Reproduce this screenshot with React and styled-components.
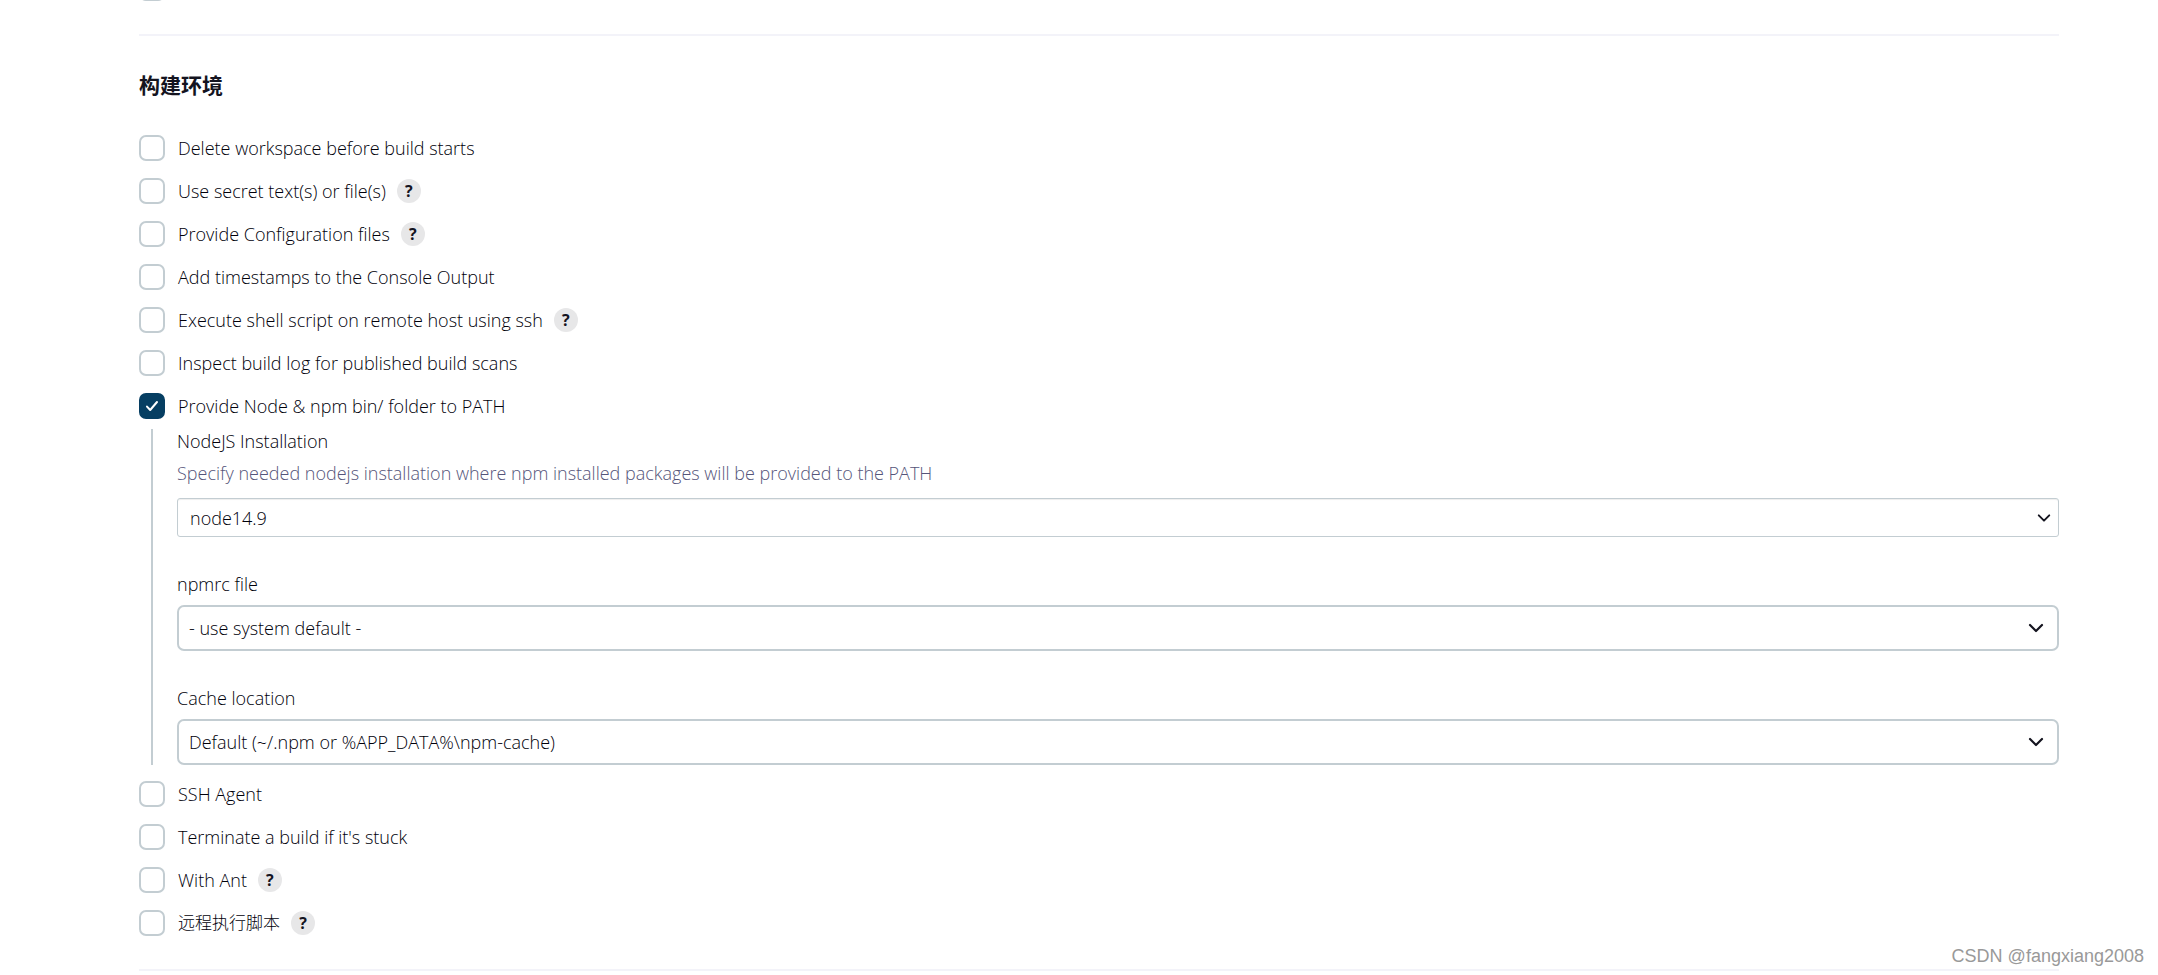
import React, { useState } from "react";
import styled, { createGlobalStyle } from "styled-components";

const BEFORE = [
  { id: "delete-workspace", label: "Delete workspace before build starts" },
  { id: "secrets", label: "Use secret text(s) or file(s)", help: true },
  { id: "config-files", label: "Provide Configuration files", help: true },
  { id: "timestamps", label: "Add timestamps to the Console Output" },
  { id: "remote-ssh", label: "Execute shell script on remote host using ssh", help: true },
  { id: "build-scans", label: "Inspect build log for published build scans" },
  { id: "nodejs", label: "Provide Node & npm bin/ folder to PATH" },
];

const AFTER = [
  { id: "ssh-agent", label: "SSH Agent" },
  { id: "timeout", label: "Terminate a build if it's stuck" },
  { id: "ant", label: "With Ant", help: true },
  { id: "remote-script", label: "远程执行脚本", help: true, cjk: true },
];

const GlobalStyle = createGlobalStyle`
  * { box-sizing: border-box; }
  body {
    margin: 0;
    background: #fff;
    color: #00000a;
    font-family: "Open Sans", "Noto Sans CJK SC", sans-serif;
    font-size: 18px;
    font-weight: 300;
    line-height: 24px;
  }
`;

const Page = styled.div`
  position: relative;
  padding: 0 99px 4px 139px;
  overflow: hidden;
`;

const Previous = styled.div`
  height: 34px;
  display: flex;
  align-items: flex-start;
  & > span { margin-top: -25px; }
`;

const Divider = styled.hr`
  height: 2px;
  margin: 0;
  border: 0;
  background: #f3f3f9;
`;

const Heading = styled.h2`
  margin: 35px 0 28px;
  color: #14141f;
  font-size: 21px;
  font-weight: 700;
  line-height: 28px;
`;

const Options = styled.div`
  padding-bottom: 24px;
`;

const Row = styled.div`
  display: flex;
  align-items: center;
  height: 43px;
  padding: 8px 0 9px;
`;

const RowLabel = styled.label`
  display: flex;
  align-items: center;
  gap: 13px;
  font-size: ${p => p.$cjk ? "17px" : "18px"};
  cursor: pointer;
`;

const BoxWrap = styled.span`
  position: relative;
  display: block;
  flex-shrink: 0;
  width: 26px;
  height: 26px;
`;

const Box = styled.input`
  appearance: none;
  display: block;
  width: 26px;
  height: 26px;
  margin: 0;
  border: 2px solid #c3cdd2;
  border-radius: 7px;
  background: #fff;
  cursor: pointer;
  &:checked {
    border-color: #063e62;
    background: #063e62;
  }
`;

const Tick = styled.svg`
  position: absolute;
  inset: 0;
  pointer-events: none;
`;

const HelpBtn = styled.button`
  display: flex;
  align-items: center;
  justify-content: center;
  width: 24px;
  height: 24px;
  margin-left: 11px;
  padding: 0;
  border: 0;
  border-radius: 50%;
  background: #e7e7e8;
  color: #14141f;
  font-family: "Open Sans", sans-serif;
  font-size: 16px;
  font-weight: 700;
  line-height: 24px;
  cursor: pointer;
`;

const Nested = styled.div`
  display: flex;
  flex-direction: column;
  gap: 35px;
  margin: 1px 0 8px 12px;
  padding: 0 0 0 24px;
  border-left: 2px solid #c3cdd2;
`;

const FieldBlock = styled.div`
  display: flex;
  flex-direction: column;
`;

const FieldLabel = styled.label`
  margin-bottom: ${p => p.$described ? "8px" : "9px"};
`;

const Desc = styled.div`
  margin-bottom: 13px;
  color: #55557a;
`;

const SelectWrap = styled.div`
  position: relative;
`;

const Select = styled.select`
  appearance: none;
  display: block;
  width: 100%;
  height: ${p => p.$compact ? "39px" : "46px"};
  padding: ${p => p.$compact ? "0 36px 0 12px" : "0 44px 0 10px"};
  border: ${p => p.$compact ? "1px" : "2px"} solid #c3cdd2;
  border-radius: ${p => p.$compact ? "3px" : "7px"};
  background: #fff;
  box-shadow: ${p => p.$compact ? "inset 0 1px 1px rgba(0, 0, 0, 0.07)" : "none"};
  color: #00000a;
  font: inherit;
`;

const Chevron = styled.svg`
  position: absolute;
  top: 50%;
  right: ${p => p.$compact ? "8px" : "15px"};
  transform: translateY(-50%);
  pointer-events: none;
`;

const Watermark = styled.div`
  position: absolute;
  right: 14px;
  bottom: 7px;
  color: #999;
  font-family: "Liberation Sans", sans-serif;
  font-size: 18px;
  font-weight: 400;
  text-shadow: -1px -1px 0 #fff;
`;

function Checkbox({ id, checked, onChange, label }) {
  return (
    <BoxWrap>
      <Box type="checkbox" id={id} checked={checked} onChange={onChange} aria-label={label} />
      {checked && (
        <Tick width="26" height="26" viewBox="0 0 26 26" fill="none">
          <path d="M8 13.6 11.2 17 18 9" stroke="#fff" strokeWidth="2" strokeLinecap="round" strokeLinejoin="round" />
        </Tick>
      )}
    </BoxWrap>
  );
}

function Option({ item, checked, toggle }) {
  return (
    <Row>
      <RowLabel htmlFor={item.id} $cjk={item.cjk}>
        <Checkbox id={item.id} checked={checked} onChange={() => toggle(item.id)} />
        {item.label}
      </RowLabel>
      {item.help && <HelpBtn type="button" aria-label={`Help for ${item.label}`}>?</HelpBtn>}
    </Row>
  );
}

function SelectField({ id, label, desc, option, compact }) {
  return (
    <FieldBlock>
      <FieldLabel htmlFor={id} $described={!!desc}>{label}</FieldLabel>
      {desc && <Desc>{desc}</Desc>}
      <SelectWrap>
        <Select id={id} $compact={compact}>
          <option>{option}</option>
        </Select>
        <Chevron $compact={compact} width={compact ? 14 : 16} height={compact ? 9 : 10} viewBox="0 0 16 10" fill="none">
          <path d="M2 2 8 8 14 2" stroke="#14141f" strokeWidth="2.2" strokeLinecap="round" strokeLinejoin="round" />
        </Chevron>
      </SelectWrap>
    </FieldBlock>
  );
}

export default function App() {
  const [selected, setSelected] = useState({ nodejs: true });

  const toggle = (id) => {
    setSelected(prev => ({ ...prev, [id]: !prev[id] }));
  };

  return (
    <>
      <GlobalStyle />
      <Page>
        <Previous>
          <Checkbox id="previous" checked={!!selected.previous} onChange={() => toggle("previous")} label="Previous option" />
        </Previous>
        <Divider />
        <Heading>构建环境</Heading>
        <Options>
          {BEFORE.map(item => (
            <Option key={item.id} item={item} checked={!!selected[item.id]} toggle={toggle} />
          ))}
          {selected.nodejs && (
            <Nested>
              <SelectField
                id="node-install"
                label="NodeJS Installation"
                desc="Specify needed nodejs installation where npm installed packages will be provided to the PATH"
                option="node14.9"
                compact
              />
              <SelectField id="npmrc" label="npmrc file" option="- use system default -" />
              <SelectField id="cache" label="Cache location" option="Default (~/.npm or %APP_DATA%\npm-cache)" />
            </Nested>
          )}
          {AFTER.map(item => (
            <Option key={item.id} item={item} checked={!!selected[item.id]} toggle={toggle} />
          ))}
        </Options>
        <Divider />
        <Watermark>CSDN @fangxiang2008</Watermark>
      </Page>
    </>
  );
}
